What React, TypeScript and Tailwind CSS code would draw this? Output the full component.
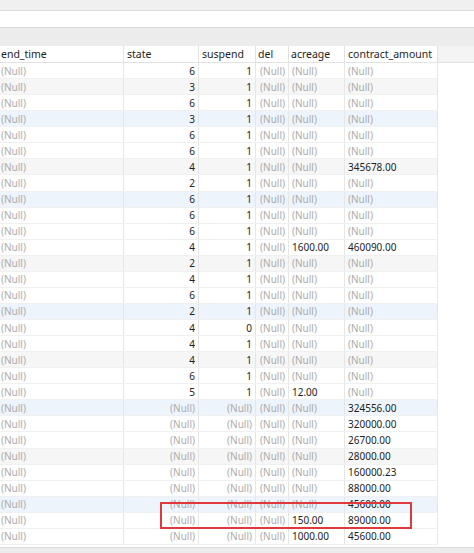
import React from "react";

type Cell = string | null;

const state: (string | null)[] = ["6","3","6","3","6","6","4","2","6","6","6","4","2","4","6","2","4","4","4","6","5",null,null,null,null,null,null,null,null,null];
const suspend: (string | null)[] = ["1","1","1","1","1","1","1","1","1","1","1","1","1","1","1","1","0","1","1","1","1",null,null,null,null,null,null,null,null,null];
const acreage: (string | null)[] = Array.from({ length: 30 }, (_, i) => {
  if (i === 11) return "1600.00";
  if (i === 20) return "12.00";
  if (i === 28) return "150.00";
  if (i === 29) return "1000.00";
  return null;
});
const contract: (string | null)[] = Array.from({ length: 30 }, (_, i) => {
  const m: Record<number, string> = {
    6: "345678.00",
    11: "460090.00",
    21: "324556.00",
    22: "320000.00",
    23: "26700.00",
    24: "28000.00",
    25: "160000.23",
    26: "88000.00",
    27: "45600.00",
    28: "89000.00",
    29: "45600.00",
  };
  return m[i] ?? null;
});

const blueRows = new Set([3, 8, 15, 21, 27]);
const grayRows = new Set([1, 6, 12, 18, 24]);

function V({ v, right, cls }: { v: Cell; right?: boolean; cls: string }) {
  return (
    <div
      className={`${cls} flex items-center h-full border-r border-[#e6e6e6] overflow-hidden whitespace-nowrap ${
        right ? "justify-end pr-[3px]" : "justify-start pl-[3px]"
      } ${v === null ? "text-[#ababab]" : "text-[#1e1e1e]"}`}
    >
      {v === null ? "(Null)" : v}
    </div>
  );
}

export default function App() {
  const font = { fontFamily: '"Noto Sans", "Open Sans", sans-serif' };
  return (
    <div className="relative w-[474px] h-[553px] bg-white overflow-hidden text-[10px] leading-none" style={font}>
      <div className="flex flex-col h-full">
        <div className="h-[11px] bg-[#f0f0f0] border-b border-[#dadada] shrink-0" />
        <div className="h-[17px] bg-white border-b border-[#dadada] shrink-0" />
        <div className="h-[18px] bg-[#ececec] shrink-0" />
        <div className="h-[17px] flex bg-[#f4f4f4] border-b border-[#e2e2e2] shrink-0 text-[#1e1e1e] text-[10.5px]">
          <div className="w-[124px] pl-[1px] flex items-center bg-white border-r border-[#e2e2e2]">end_time</div>
          <div className="w-[75px] pl-[3px] flex items-center bg-white border-r border-[#e2e2e2]">state</div>
          <div className="w-[57px] pl-[3px] flex items-center bg-white border-r border-[#e2e2e2]">suspend</div>
          <div className="w-[33px] pl-[2px] flex items-center bg-white border-r border-[#e2e2e2]">del</div>
          <div className="w-[56px] pl-[2px] flex items-center bg-white border-r border-[#e2e2e2]">acreage</div>
          <div className="w-[93px] pl-[3px] flex items-center bg-white border-r border-[#e2e2e2]">contract_amount</div>
        </div>
        <div className="flex flex-col shrink-0">
          {state.map((s, i) => (
            <div
              key={i}
              className={`h-[16.07px] flex w-[438px] border-b border-[#f0f0f0] ${
                blueRows.has(i) ? "bg-[#eef4fc]" : grayRows.has(i) ? "bg-[#f6f6f6]" : "bg-white"
              }`}
            >
              <div className="w-[124px] h-full flex items-center pl-[1px] border-r border-[#e6e6e6] text-[#ababab]">(Null)</div>
              <V cls="w-[75px]" v={s} right />
              <V cls="w-[57px]" v={suspend[i]} right />
              <V cls="w-[33px]" v={null} right />
              <V cls="w-[56px]" v={acreage[i]} />
              <V cls="w-[93px]" v={contract[i]} />
            </div>
          ))}
        </div>
        <div className="h-[2px] shrink-0" />
        <div className="flex-1 bg-[#ececec] border-t border-[#dcdcdc]" />
      </div>
      <div className="absolute left-[160px] top-[502px] w-[252px] h-[27px] border-2 border-[#e0393c]" />
    </div>
  );
}
